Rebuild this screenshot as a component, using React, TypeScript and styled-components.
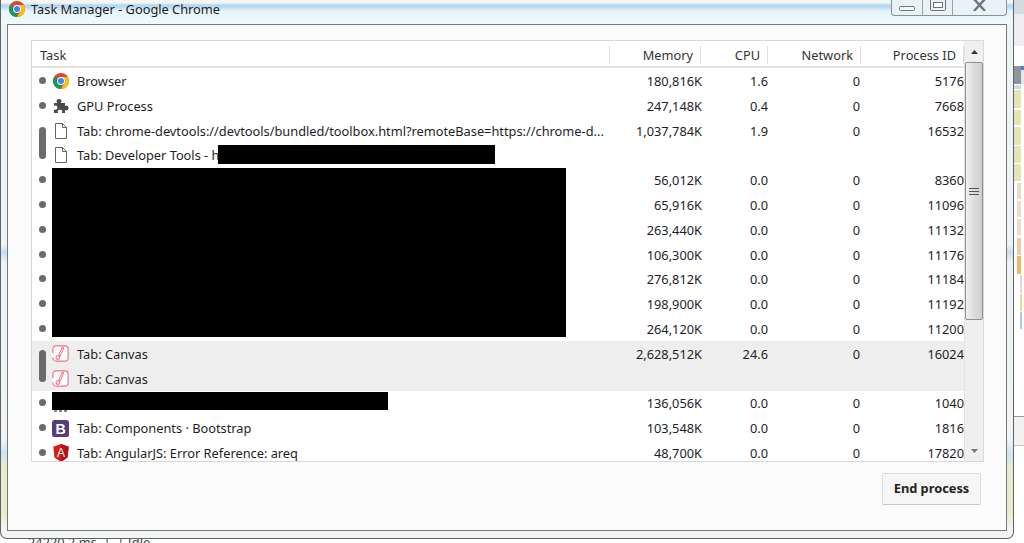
import { createGlobalStyle, styled } from "styled-components";
import type { ReactNode } from "react";

const Global = createGlobalStyle`
  html, body {
    margin: 0;
    padding: 0;
    width: 1024px;
    height: 543px;
    overflow: hidden;
    background: #fff;
  }
  body {
    font-family: "Noto Sans", "Open Sans", "Liberation Sans", sans-serif;
  }
`;

const Page = styled.div`
  position: relative;
  display: flex;
  align-items: flex-start;
  width: 1024px;
  height: 543px;
  overflow: hidden;
  background: #fff;
`;

const Frame = styled.div`
  position: relative;
  z-index: 1;
  flex: none;
  width: 1014px;
  height: 539px;
  box-sizing: border-box;
  padding: 0 6px 7px 6px;
  display: flex;
  flex-direction: column;
  border: 1px solid #5f6468;
  border-top: none;
  border-radius: 0 0 7px 7px;
  background:
    linear-gradient(180deg, #f4f6f2 0, #f4f6f2 3px, #b6d7f3 5px, #b9d9f3 7px, #e6f5fb 11px, #eefafd 24px, transparent 24px),
    linear-gradient(180deg, #eef3f5 0, #eef3f5 245px, #c9dcee 252px, #eef3f5 262px, #f1f3f4 440px, #cfe5f1 452px, #ebebcb 470px, #ecebd0 515px, #f3f5f5 530px);
`;

const TitleBar = styled.div`
  flex: none;
  height: 24px;
  display: flex;
  align-items: flex-start;
  gap: 6px;
  padding: 1px 0 0 2px;
  box-sizing: border-box;
  font-size: 12.8px;
  color: #1c1c1c;
`;

const TitleText = styled.span`
  flex: 1;
  line-height: 16px;
`;

const Controls = styled.div`
  margin-top: -1px;
  display: flex;
  height: 15px;
  border: 1px solid #8a9299;
  border-top: none;
  border-radius: 0 0 4px 4px;
  background: #e9f2f7;
  overflow: hidden;
`;

const ControlButton = styled.div<{ $w: number }>`
  width: ${(p) => p.$w}px;
  display: flex;
  align-items: flex-start;
  justify-content: center;
  & + & {
    border-left: 1px solid #9aa2a9;
  }
`;

const Client = styled.div`
  flex: 1;
  box-sizing: border-box;
  border: 1px solid #73787c;
  background: #fbfbfb;
  padding: 15px 22px 0 23px;
  display: flex;
  flex-direction: column;
`;

const TableBox = styled.div`
  position: relative;
  display: flex;
  width: 953px;
  height: 422px;
  box-sizing: border-box;
  border: 1px solid #d9d9d9;
  background: #fff;
  overflow: hidden;
`;

const TableMain = styled.div`
  flex: none;
  width: 932px;
  overflow: hidden;
`;

const Header = styled.div`
  display: grid;
  grid-template-columns: 578px 91px 67px 93px 103px;
  height: 23px;
  padding-bottom: 2px;
  margin-bottom: 0.6px;
  align-items: end;
  border-bottom: 2px solid #e3e3e3;
`;

const HeadCell = styled.div<{ $left?: boolean }>`
  height: 18px;
  line-height: 18px;
  font-size: 12.8px;
  color: #333;
  text-align: ${(p) => (p.$left ? "left" : "right")};
  padding: ${(p) => (p.$left ? "0 0 0 8px" : "0 7px 0 0")};
  border-right: 1px solid #dedede;
`;

const Row = styled.div<{ $sel?: boolean }>`
  display: grid;
  grid-template-columns: 20px 17px 541px 92px 66px 92px 104px;
  height: 24.8px;
  align-items: center;
  font-size: 12.8px;
  color: #1e1e28;
  background: ${(p) => (p.$sel ? "#eeeeee" : "transparent")};
`;

const Marker = styled.div`
  display: flex;
  justify-content: center;
`;

const Dot = styled.span`
  width: 7px;
  height: 7px;
  margin: -1px 0 0 0;
  border-radius: 50%;
  background: #6b6b6b;
`;

const Group = styled.span<{ $top: number }>`
  position: absolute;
  left: 7px;
  top: ${(p) => p.$top}px;
  width: 7px;
  height: 32px;
  border-radius: 4px;
  background: #6b6b6b;
`;

const IconCell = styled.div`
  display: flex;
  align-items: center;
  justify-content: center;
`;

const Name = styled.div`
  white-space: nowrap;
  overflow: hidden;
  padding-left: 8px;
`;

const Num = styled.div`
  text-align: right;
  white-space: nowrap;
`;

const Scrollbar = styled.div`
  flex: none;
  width: 18px;
  display: flex;
  flex-direction: column;
  background: #efefef;
  border-left: 1px solid #e4e4e4;
`;

const Arrow = styled.div`
  flex: none;
  height: 21px;
  display: flex;
  align-items: center;
  justify-content: center;
`;

const Thumb = styled.div`
  flex: none;
  height: 258px;
  box-sizing: border-box;
  border: 1px solid #8f8f8f;
  border-radius: 2px;
  background: linear-gradient(90deg, #f1f1f1, #dcdcdc 50%, #cfcfcf);
  display: flex;
  flex-direction: column;
  align-items: center;
  justify-content: center;
  gap: 2px;
`;

const Grip = styled.span`
  width: 10px;
  height: 1px;
  background: #555;
`;

const Spacer = styled.div`
  flex: 1;
`;

const Redact = styled.div<{ $l: number; $t: number; $w: number; $h: number }>`
  position: absolute;
  left: ${(p) => p.$l}px;
  top: ${(p) => p.$t}px;
  width: ${(p) => p.$w}px;
  height: ${(p) => p.$h}px;
  background: #000;
`;

const Stub = styled.div`
  position: absolute;
  left: 22px;
  top: 369px;
  width: 13px;
  height: 2px;
  background: repeating-linear-gradient(90deg, #8a8a8a 0 3px, #fff 3px 5px);
`;

const Footer = styled.div`
  display: flex;
  justify-content: flex-end;
  padding: 11px 3px 0 0;
`;

const EndButton = styled.button`
  width: 99px;
  height: 32px;
  border: 1px solid #dcdcdc;
  border-bottom-color: #c8c8c8;
  border-radius: 2px;
  background: #f6f6f6;
  font: 700 12.8px "Noto Sans", sans-serif;
  color: #222;
  padding: 0 0 2px;
`;

const Strip = styled.div`
  position: absolute;
  left: 28px;
  top: 535px;
  font-size: 12.8px;
  line-height: 15px;
  color: #444;
  white-space: pre;
`;

/* devtools timeline of the window behind, seen past the frame */
const Behind = styled.div`
  flex: 1;
  height: 543px;
  display: flex;
  flex-direction: column;
  overflow: hidden;
`;

const BehindBar = styled.div<{ $h: number; $l?: number; $w?: number; $c: string }>`
  flex: none;
  height: ${(p) => p.$h}px;
  margin-left: ${(p) => p.$l ?? 0}px;
  width: ${(p) => p.$w ?? 10}px;
  background: ${(p) => p.$c};
`;

const behind = [
  { h: 14, c: "#d5dbe0" },
  { h: 32, c: "#eceeef" },
  { h: 20, c: "#fff" },
  { h: 4, c: "linear-gradient(90deg, #8e9499 70%, #3f87e6 70%)" },
  { h: 14, c: "linear-gradient(90deg, #8e9499 70%, #e4e6e8 70%)" },
  { h: 1, c: "#fff" },
  { h: 4, w: 7, c: "#c5e3e0" },
  { h: 1, c: "#fff" },
  { h: 18, w: 7, c: "#e5e5b8" },
  { h: 2, c: "#fff" },
  { h: 15, w: 7, c: "#e5e5b8" },
  { h: 2, c: "#fff" },
  { h: 18, w: 7, c: "#e5e5b8" },
  { h: 1, c: "#fff" },
  { h: 17, w: 7, c: "#e5e5b8" },
  { h: 1, c: "#fff" },
  { h: 17, w: 7, c: "#e5e5b8" },
  { h: 2, c: "#fff" },
  { h: 16, l: 3, w: 4, c: "#ecd9c8" },
  { h: 2, c: "#fff" },
  { h: 16, l: 3, w: 4, c: "#ecdcc8" },
  { h: 2, c: "#fff" },
  { h: 16, l: 3, w: 4, c: "#ecdcc8" },
  { h: 3, c: "#fff" },
  { h: 17, l: 3, w: 4, c: "#efc9a8" },
  { h: 1, c: "#fff" },
  { h: 18, l: 3, w: 4, c: "#f2b36b" },
  { h: 1, c: "#fff" },
  { h: 18, l: 6, w: 2, c: "#f3d0d5" },
  { h: 1, c: "#fff" },
  { h: 17, l: 6, w: 2, c: "#fbd28f" },
  { h: 1, c: "#fff" },
  { h: 17, l: 6, w: 2, c: "#a9cdf2" },
  { h: 87, c: "#fff" },
  { h: 1, c: "#9a9a9a" },
  { h: 28, c: "#f2f2f2" },
  { h: 1, c: "#c4c4c4" },
];

const ChromeIcon = () => (
  <svg width="16" height="16" viewBox="0 0 16 16">
    <circle cx="8" cy="8" r="8" fill="#db4437" />
    <path d="M8 16 A8 8 0 0 1 1.100 4 L4.500 6 L8 8 Z" fill="#0f9d58" />
    <path d="M8 4 H14.900 A8 8 0 0 1 8 16 L11.500 10 Z" fill="#f4c20d" />
    <circle cx="8" cy="8" r="3.900" fill="#fff" />
    <circle cx="8" cy="8" r="3" fill="#4285f4" />
  </svg>
);

const PuzzleIcon = () => (
  <svg width="16" height="16" viewBox="0 0 16 16">
    <path
      d="M1 5h3.400c-.6-.7-.9-1.300-.9-2C3.500 1.700 4.600 1 6 1s2.500.7 2.500 2c0 .7-.3 1.300-.9 2H12v3.300c.7-.5 1.200-.7 1.700-.7 1.100 0 1.800 1 1.800 2.400s-.7 2.400-1.800 2.400c-.5 0-1-.2-1.700-.7V15H8.700c.4-.6.600-1.100.6-1.600 0-1-1-1.600-2.300-1.600s-2.300.6-2.300 1.600c0 .5.2 1 .6 1.600H1v-3.800c.6.400 1.100.6 1.600.6 1.100 0 1.800-.9 1.800-2.200S3.700 7.400 2.600 7.400c-.5 0-1 .2-1.600.6z"
      fill="#4a4a4a"
    />
  </svg>
);

const PageIcon = () => (
  <svg width="12" height="16" viewBox="0 0 12 16">
    <path d="M.5.5h7l4 4v11H.500z" fill="#fff" stroke="#666" />
    <path d="M7.500.5v4h4" fill="none" stroke="#666" />
  </svg>
);

const CanvasIcon = () => (
  <svg width="19" height="19" viewBox="0 0 19 19">
    <rect x="1" y="1" width="17" height="17" rx="3.500" fill="#fff" stroke="#f56f8c" strokeWidth="1.300" />
    <rect x="0" y="9" width="2" height="5" fill="#fff" />
    <path d="M12 3.500 8.500 11.500" stroke="#f56f8c" strokeWidth="3" strokeLinecap="round" fill="none" />
    <path d="M12 3.800 8.600 11.200" stroke="#fff" strokeWidth="1" fill="none" />
    <circle cx="6.500" cy="14" r="2" fill="#fff" stroke="#f56f8c" strokeWidth="1.300" />
  </svg>
);

const BootstrapIcon = () => (
  <svg width="18" height="19" viewBox="0 0 18 19">
    <rect y=".5" width="18" height="18" rx="3" fill="#563d7c" />
    <text x="9" y="15" textAnchor="middle" fontFamily="Liberation Sans" fontWeight="700" fontSize="15" fill="#fff">
      B
    </text>
  </svg>
);

const AngularIcon = () => (
  <svg width="16" height="18" viewBox="0 0 16 18">
    <path d="M8 0 .3 2.800 1.500 13.500 8 18l6.500-4.500L15.700 2.800z" fill="#dd1b16" />
    <path d="M8 0v18l6.500-4.500L15.700 2.800z" fill="#b3131a" />
    <text x="8" y="13" textAnchor="middle" fontFamily="Liberation Sans" fontSize="12" fill="#fff">
      A
    </text>
  </svg>
);

type Item = {
  dot?: boolean;
  icon?: ReactNode;
  name?: string;
  mem?: string;
  cpu?: string;
  net?: string;
  pid?: string;
  sel?: boolean;
};

const items: Item[] = [
  { dot: true, icon: <ChromeIcon />, name: "Browser", mem: "180,816K", cpu: "1.6", net: "0", pid: "5176" },
  { dot: true, icon: <PuzzleIcon />, name: "GPU Process", mem: "247,148K", cpu: "0.4", net: "0", pid: "7668" },
  { icon: <PageIcon />, name: "Tab: chrome-devtools://devtools/bundled/toolbox.html?remoteBase=https://chrome-d...", mem: "1,037,784K", cpu: "1.9", net: "0", pid: "16532" },
  { icon: <PageIcon />, name: "Tab: Developer Tools - h" },
  { dot: true, mem: "56,012K", cpu: "0.0", net: "0", pid: "8360" },
  { dot: true, mem: "65,916K", cpu: "0.0", net: "0", pid: "11096" },
  { dot: true, mem: "263,440K", cpu: "0.0", net: "0", pid: "11132" },
  { dot: true, mem: "106,300K", cpu: "0.0", net: "0", pid: "11176" },
  { dot: true, mem: "276,812K", cpu: "0.0", net: "0", pid: "11184" },
  { dot: true, mem: "198,900K", cpu: "0.0", net: "0", pid: "11192" },
  { dot: true, mem: "264,120K", cpu: "0.0", net: "0", pid: "11200" },
  { icon: <CanvasIcon />, name: "Tab: Canvas", mem: "2,628,512K", cpu: "24.6", net: "0", pid: "16024", sel: true },
  { icon: <CanvasIcon />, name: "Tab: Canvas", sel: true },
  { dot: true, mem: "136,056K", cpu: "0.0", net: "0", pid: "1040" },
  { dot: true, icon: <BootstrapIcon />, name: "Tab: Components · Bootstrap", mem: "103,548K", cpu: "0.0", net: "0", pid: "1816" },
  { dot: true, icon: <AngularIcon />, name: "Tab: AngularJS: Error Reference: areq", mem: "48,700K", cpu: "0.0", net: "0", pid: "17820" },
];

export default function App() {
  return (
    <>
      <Global />
      <Page>
        <Frame>
          <TitleBar>
            <ChromeIcon />
            <TitleText>Task Manager - Google Chrome</TitleText>
            <Controls>
              <ControlButton $w={30}>
                <svg width="16" height="12" viewBox="0 0 16 12">
                  <rect x=".5" y="6.500" width="15" height="4" rx="1" fill="#f4f7f9" stroke="#6d757b" />
                </svg>
              </ControlButton>
              <ControlButton $w={29}>
                <svg width="16" height="12" viewBox="0 0 16 12">
                  <rect x=".5" y="-2.500" width="15" height="13" rx="1" fill="none" stroke="#6d757b" />
                  <rect x="3.500" y="2.500" width="9" height="5" fill="#fff" stroke="#6d757b" />
                </svg>
              </ControlButton>
              <ControlButton $w={53}>
                <svg width="15" height="11" viewBox="0 0 15 11">
                  <path d="M2 -1 13 11M13 -1 2 11" stroke="#6d757b" strokeWidth="2.400" />
                </svg>
              </ControlButton>
            </Controls>
          </TitleBar>
          <Client>
            <TableBox>
              <TableMain>
                <Header>
                  <HeadCell $left>Task</HeadCell>
                  <HeadCell>Memory</HeadCell>
                  <HeadCell>CPU</HeadCell>
                  <HeadCell>Network</HeadCell>
                  <HeadCell>Process ID</HeadCell>
                </Header>
                {items.map((it, i) => (
                  <Row key={i} $sel={it.sel}>
                    <Marker>{it.dot && <Dot />}</Marker>
                    <IconCell>{it.icon}</IconCell>
                    <Name>{it.name}</Name>
                    <Num>{it.mem}</Num>
                    <Num>{it.cpu}</Num>
                    <Num>{it.net}</Num>
                    <Num>{it.pid}</Num>
                  </Row>
                ))}
              </TableMain>
              <Scrollbar>
                <Arrow>
                  <svg width="7" height="4" viewBox="0 0 7 4">
                    <path d="M3.500 0 7 4H0z" fill="#333" />
                  </svg>
                </Arrow>
                <Thumb>
                  <Grip />
                  <Grip />
                  <Grip />
                </Thumb>
                <Spacer />
                <Arrow>
                  <svg width="7" height="4" viewBox="0 0 7 4">
                    <path d="M0 0h7L3.500 4z" fill="#777" />
                  </svg>
                </Arrow>
              </Scrollbar>
              <Group $top={86} />
              <Group $top={309} />
              <Redact $l={186} $t={104} $w={277} $h={19} />
              <Redact $l={20} $t={127} $w={514} $h={169} />
              <Redact $l={20} $t={351} $w={336} $h={18} />
              <Stub />
            </TableBox>
            <Footer>
              <EndButton>End process</EndButton>
            </Footer>
          </Client>
        </Frame>
        <Behind>
          {behind.map((b, i) => (
            <BehindBar key={i} $h={b.h} $l={b.l} $w={b.w} $c={b.c} />
          ))}
        </Behind>
        <Strip>24220.2 ms  |  | Idle</Strip>
      </Page>
    </>
  );
}
